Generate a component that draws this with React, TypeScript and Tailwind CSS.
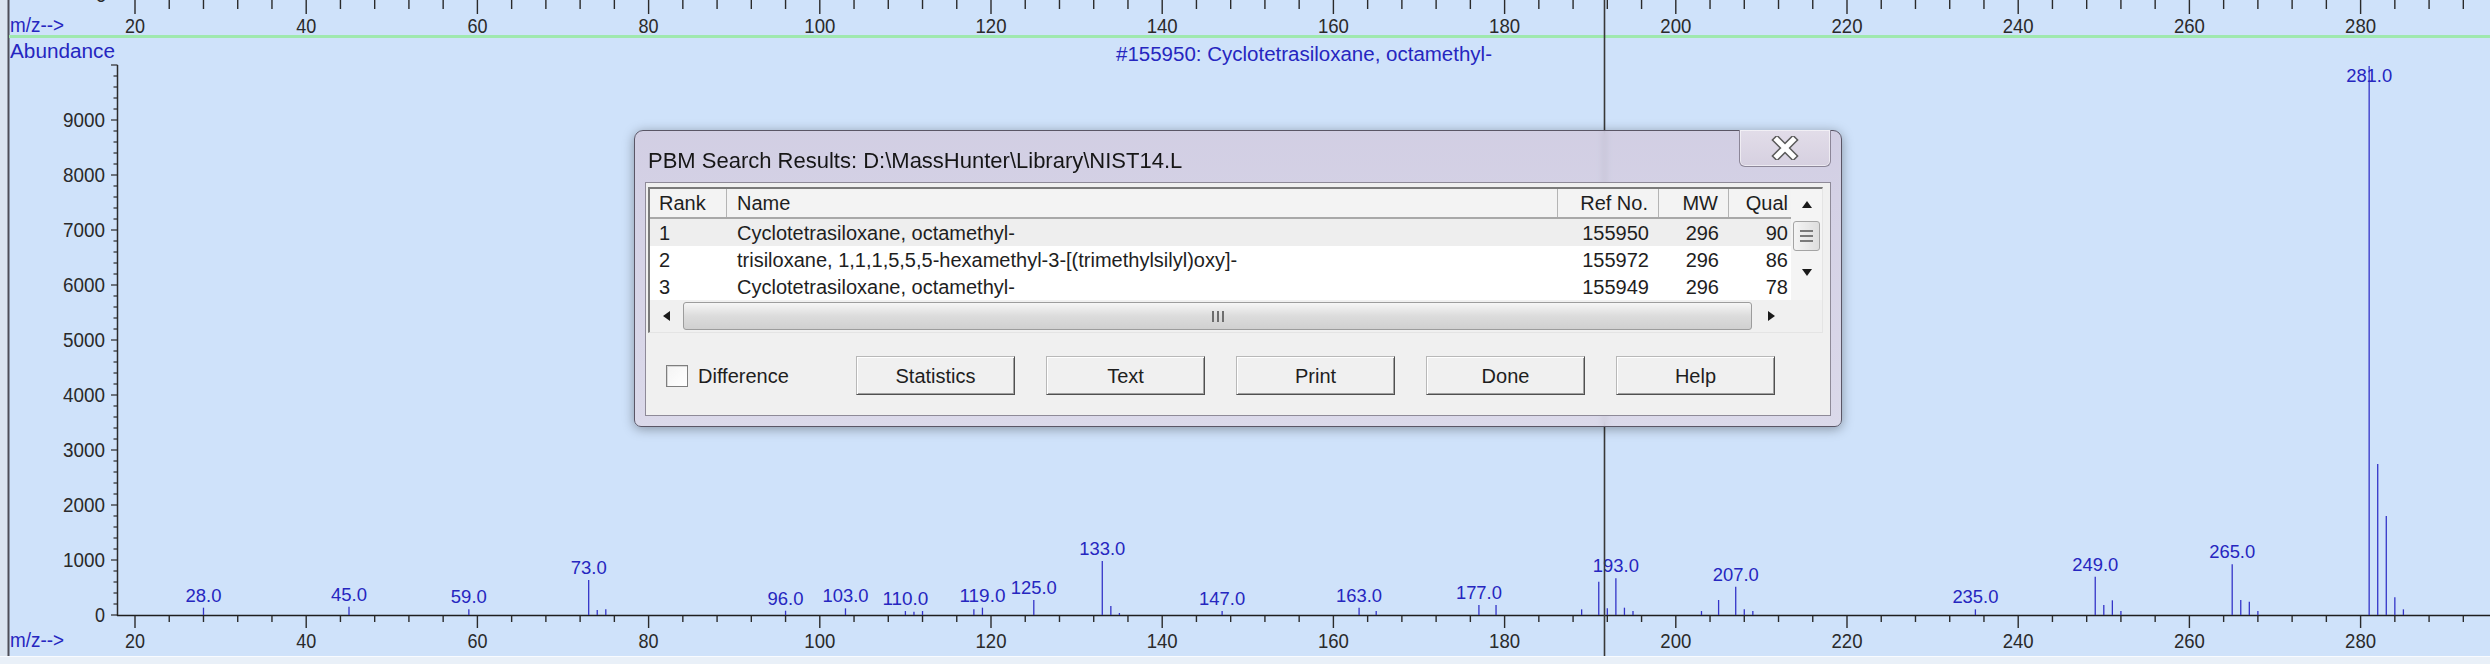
import React from "react";

const FONT = '"Liberation Sans", Arial, sans-serif';

// m/z and abundance -> pixel
const X = (mz: number) => 135 + (mz - 20) * 8.56;
const Y = (a: number) => 615 - a * 0.055;

const peaks: [number, number][] = [
  [28, 133], [45, 151], [59, 103], [73, 636], [74, 90], [75, 103], [96, 78],
  [103, 121], [110, 72], [111, 60], [112, 72], [118, 103], [119, 133], [125, 273],
  [133, 982], [134, 164], [135, 36], [147, 72], [163, 133], [165, 72], [177, 182],
  [179, 182], [189, 103], [191, 606], [192, 121], [193, 667], [194, 133], [195, 72],
  [203, 72], [205, 273], [207, 515], [208, 103], [209, 72], [235, 103], [249, 697],
  [250, 182], [251, 267], [252, 72], [265, 921], [266, 273], [267, 242], [268, 72],
  [281, 9980], [282, 2745], [283, 1800], [284, 321], [285, 103],
];

const labeled = [28, 45, 59, 73, 96, 103, 110, 119, 125, 133, 147, 163, 177, 193, 207, 235, 249, 265, 281];

const results = [
  { rank: 1, name: "Cyclotetrasiloxane, octamethyl-", ref: "155950", mw: "296", qual: "90" },
  { rank: 2, name: "trisiloxane, 1,1,1,5,5,5-hexamethyl-3-[(trimethylsilyl)oxy]-", ref: "155972", mw: "296", qual: "86" },
  { rank: 3, name: "Cyclotetrasiloxane, octamethyl-", ref: "155949", mw: "296", qual: "78" },
];

function Spectrum() {
  const ticks: number[] = [];
  for (let m = 20; m <= 292; m += 4) ticks.push(m);
  const yticks: number[] = [];
  for (let a = 0; a <= 10000; a += 200) yticks.push(a);
  const axisNums = ticks.filter((m) => m % 20 === 0);

  return (
    <svg width={2490} height={664} className="block" style={{ fontFamily: FONT }}>
      {/* left gutter + border */}
      <rect x={0} y={0} width={8} height={656} fill="#dbe5f1" />
      <line x1={8.5} y1={0} x2={8.5} y2={656} stroke="#4e4e58" strokeWidth={2} />

      {/* tail of the panel above */}
      <text x={101} y={-5} fontSize={20} fill="#2a2a2a" textAnchor="middle" dominantBaseline="central">0</text>
      {ticks.map((m) => (
        <line key={"t" + m} x1={X(m)} y1={0} x2={X(m)} y2={m % 20 === 0 ? 14 : 9} stroke="#2a2a2a" strokeWidth={1.4} />
      ))}
      {axisNums.map((m) => (
        <text key={"tl" + m} x={X(m)} y={25} fontSize={21} fill="#2a2a2a" textAnchor="middle" dominantBaseline="central"
          textLength={m < 100 ? 20 : 31} lengthAdjust="spacingAndGlyphs">{m}</text>
      ))}
      <text x={10} y={25} fontSize={20} fill="#2626c0" dominantBaseline="central" textLength={54} lengthAdjust="spacingAndGlyphs">m/z--&gt;</text>

      <rect x={9} y={35} width={2481} height={3} fill="#9fe8ae" />

      <text x={10} y={51} fontSize={20} fill="#2626c0" dominantBaseline="central" textLength={105} lengthAdjust="spacingAndGlyphs">Abundance</text>
      <text x={1116} y={54} fontSize={20} fill="#2626c0" dominantBaseline="central" textLength={376} lengthAdjust="spacingAndGlyphs">#155950: Cyclotetrasiloxane, octamethyl-</text>

      {/* y axis */}
      <line x1={117.5} y1={Y(10000)} x2={117.5} y2={616} stroke="#2a2a2a" strokeWidth={1.5} />
      {yticks.map((a) => (
        <line key={"y" + a} x1={a % 1000 === 0 ? 111 : 113.5} y1={Y(a)} x2={117.5} y2={Y(a)} stroke="#2a2a2a" strokeWidth={1.2} />
      ))}
      {yticks.filter((a) => a % 1000 === 0 && a < 10000).map((a) => (
        <text key={"yl" + a} x={105} y={Y(a)} fontSize={20} fill="#2a2a2a" textAnchor="end" dominantBaseline="central"
          textLength={a === 0 ? 10 : 42} lengthAdjust="spacingAndGlyphs">{a}</text>
      ))}

      {/* x axis */}
      <line x1={117} y1={615.5} x2={2490} y2={615.5} stroke="#1e1e1e" strokeWidth={1.6} />
      {ticks.map((m) => (
        <line key={"b" + m} x1={X(m)} y1={615.5} x2={X(m)} y2={m % 20 === 0 ? 628 : 622} stroke="#2a2a2a" strokeWidth={1.4} />
      ))}
      {axisNums.map((m) => (
        <text key={"bl" + m} x={X(m)} y={640} fontSize={21} fill="#2a2a2a" textAnchor="middle" dominantBaseline="central"
          textLength={m < 100 ? 20 : 31} lengthAdjust="spacingAndGlyphs">{m}</text>
      ))}
      <text x={10} y={640} fontSize={20} fill="#2626c0" dominantBaseline="central" textLength={54} lengthAdjust="spacingAndGlyphs">m/z--&gt;</text>

      {/* peaks */}
      {peaks.map(([m, a]) => (
        <line key={"p" + m} x1={X(m)} y1={615} x2={X(m)} y2={Y(a)} stroke="#3434c8" strokeWidth={1.3} />
      ))}
      {peaks.filter(([m]) => labeled.includes(m)).map(([m, a]) => {
        const label = m.toFixed(1);
        return (
          <text key={"pl" + m} x={X(m)} y={Math.max(Y(a) - 12, 76)} fontSize={17.5} fill="#2626c0" textAnchor="middle"
            dominantBaseline="central" textLength={label.length === 4 ? 36 : 46} lengthAdjust="spacingAndGlyphs">{label}</text>
        );
      })}

      {/* cursor */}
      <line x1={1604.5} y1={0} x2={1604.5} y2={656} stroke="#383838" strokeWidth={1.6} />

      <rect x={0} y={656} width={2490} height={8} fill="#e9f0f8" />
      <line x1={0} y1={656.5} x2={2490} y2={656.5} stroke="#f8fbff" strokeWidth={1} />
    </svg>
  );
}

function CloseButton() {
  return (
    <div className="-mt-[1px] w-[92px] h-[37px] rounded-b-[6px] border border-t-0 border-[#8c8698] bg-linear-to-b from-[#e2dde9] to-[#d6d0e0] shadow-[inset_0_0_0_1px_rgba(255,255,255,0.55)] flex items-center justify-center">
      <svg width={32} height={24} viewBox="0 0 32 24">
        <path d="M8 4 L24 20 M24 4 L8 20" stroke="#5a5a5a" strokeWidth={8} strokeLinecap="square" />
        <path d="M8 4 L24 20 M24 4 L8 20" stroke="#ffffff" strokeWidth={5} strokeLinecap="square" />
      </svg>
    </div>
  );
}

function Tri({ dir }: { dir: "up" | "down" | "left" | "right" }) {
  const d = {
    up: "M0 7 L5 0 L10 7 Z",
    down: "M0 0 L5 7 L10 0 Z",
    left: "M7 0 L0 5 L7 10 Z",
    right: "M0 0 L7 5 L0 10 Z",
  }[dir];
  const vertical = dir === "up" || dir === "down";
  return (
    <svg width={vertical ? 10 : 7} height={vertical ? 7 : 10} viewBox={vertical ? "0 0 10 7" : "0 0 7 10"}>
      <path d={d} fill="#1a1a1a" />
    </svg>
  );
}

function ResultsList() {
  return (
    <div className="ml-[2px] mr-[7px] mt-[4px] h-[146px] border-t-2 border-l-2 border-[#7a7a7a] border-r border-b border-r-[#e4e4e4] border-b-[#e4e4e4] bg-white flex flex-col">
      <div className="flex">
        <div className="flex flex-col w-[1141px]">
          {/* header */}
          <div className="flex h-[30px] bg-[#f3f3f3] border-b-2 border-[#a8a8a8] text-[#1e1e1e]">
            <div className="w-[77px] pl-[9px] flex items-center border-r border-[#b4b4b4]">Rank</div>
            <div className="w-[831px] pl-[10px] flex items-center border-r border-[#b4b4b4]">Name</div>
            <div className="w-[101px] pr-[10px] flex items-center justify-end border-r border-[#b4b4b4]">Ref No.</div>
            <div className="w-[70px] pr-[10px] flex items-center justify-end border-r border-[#b4b4b4]">MW</div>
            <div className="w-[62px] pr-[3px] flex items-center justify-end">Qual</div>
          </div>
          {results.map((r, i) => (
            <div key={r.rank} className={`flex h-[27px] items-center text-[#1e1e1e] ${i === 0 ? "bg-[#eeeeee]" : "bg-white"}`}>
              <div className="w-[77px] pl-[9px]">{r.rank}</div>
              <div className="w-[831px] pl-[10px] whitespace-nowrap">{r.name}</div>
              <div className="w-[101px] pr-[10px] text-right">{r.ref}</div>
              <div className="w-[70px] pr-[10px] text-right">{r.mw}</div>
              <div className="w-[62px] pr-[3px] text-right">{r.qual}</div>
            </div>
          ))}
        </div>
        {/* vertical scrollbar */}
        <div className="flex-1 bg-[#f4f4f4] flex flex-col items-center">
          <div className="h-[30px] flex items-center justify-center"><Tri dir="up" /></div>
          <div className="mt-[2px] w-[27px] h-[30px] rounded-[3px] border border-[#a4a4a4] bg-linear-to-r from-[#f4f4f4] to-[#dedede] flex flex-col items-center justify-center gap-[3px]">
            <div className="w-[13px] h-[2px] bg-[#7a7a7a]" />
            <div className="w-[13px] h-[2px] bg-[#7a7a7a]" />
            <div className="w-[13px] h-[2px] bg-[#7a7a7a]" />
          </div>
          <div className="flex-1 flex items-center justify-center pb-[6px]"><Tri dir="down" /></div>
        </div>
      </div>
      {/* horizontal scrollbar */}
      <div className="flex flex-1 bg-[#f0f0f0]">
        <div className="w-[1141px] flex items-center">
          <div className="w-[33px] flex justify-center"><Tri dir="left" /></div>
          <div className="w-[1069px] h-[28px] rounded-[3px] border border-[#9c9c9c] bg-linear-to-b from-[#f6f6f6] via-[#dcdcdc] to-[#d0d0d0] flex items-center justify-center gap-[3px]">
            <div className="w-[2px] h-[11px] bg-[#6e6e6e]" />
            <div className="w-[2px] h-[11px] bg-[#6e6e6e]" />
            <div className="w-[2px] h-[11px] bg-[#6e6e6e]" />
          </div>
          <div className="flex-1 flex justify-center"><Tri dir="right" /></div>
        </div>
        <div className="flex-1 bg-[#f0f0f0]" />
      </div>
    </div>
  );
}

function WinButton({ children }: { children: React.ReactNode }) {
  return (
    <div className="w-[159px] h-[39px] flex items-center justify-center bg-[#f0f0f0] border border-[#b8b8b8] border-r-[#505050] border-b-[#505050] shadow-[inset_1px_1px_0_#ffffff,inset_-1px_-1px_0_#a0a0a0] text-[#1e1e1e]">
      {children}
    </div>
  );
}

function SearchDialog() {
  return (
    <div
      className="absolute left-[634px] top-[130px] w-[1208px] h-[297px] rounded-t-[9px] rounded-b-[7px] border border-[#5a5666] bg-linear-to-b from-[#d2cade]/80 to-[#ddd7e6]/80 backdrop-blur-[3px] shadow-[0_2px_12px_rgba(0,0,0,0.35)] flex flex-col px-[10px] pb-[10px]"
      style={{ fontFamily: FONT }}
    >
      <div className="h-[51px] flex items-start justify-between">
        <div className="pt-[18px] pl-[3px] text-[22px] leading-[24px] text-[#161616]">
          PBM Search Results: D:\MassHunter\Library\NIST14.L
        </div>
        <CloseButton />
      </div>
      <div className="flex-1 bg-[#f0f0f0] border border-[#8e8a98] text-[20px] leading-[24px] flex flex-col">
        <ResultsList />
        <div className="mt-[23px] h-[39px] flex items-center pl-[20px]">
          <div className="w-[190px] flex items-center">
            <div className="w-[22px] h-[22px] border border-[#7e7e7e] bg-linear-to-br from-[#f4f4f4] to-white shadow-[inset_1px_1px_0_#d6d6d6]" />
            <span className="ml-[10px] text-[#1e1e1e]">Difference</span>
          </div>
          <div className="flex gap-[31px]">
            <WinButton>Statistics</WinButton>
            <WinButton>Text</WinButton>
            <WinButton>Print</WinButton>
            <WinButton>Done</WinButton>
            <WinButton>Help</WinButton>
          </div>
        </div>
      </div>
    </div>
  );
}

export default function App() {
  return (
    <div className="relative w-[2490px] h-[664px] overflow-hidden bg-[#cfe2fa]">
      <Spectrum />
      <SearchDialog />
    </div>
  );
}
